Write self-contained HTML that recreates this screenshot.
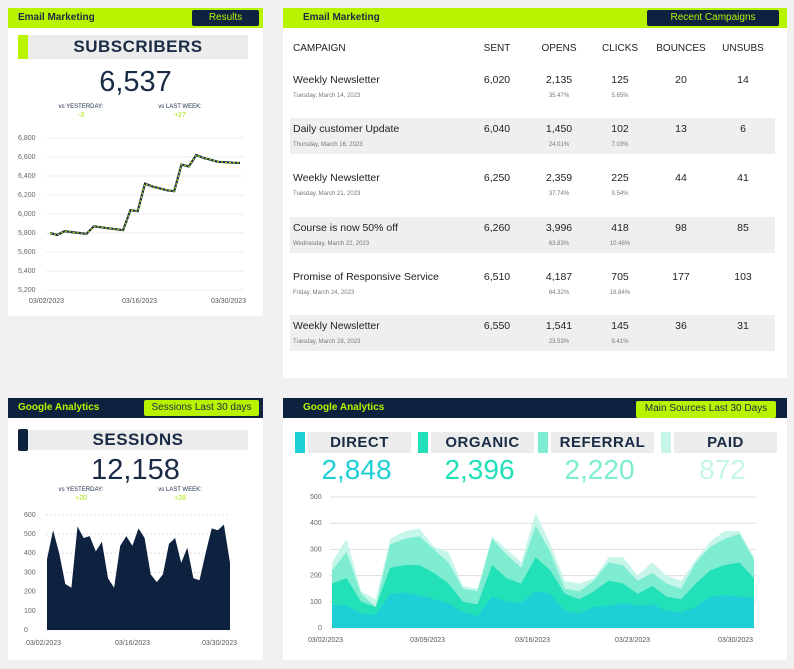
<!DOCTYPE html>
<html><head><meta charset="utf-8"><style>
*{margin:0;padding:0;box-sizing:border-box}
body{width:794px;height:669px;background:#f1f1f1;font-family:"Liberation Sans",sans-serif;position:relative;overflow:hidden;color:#333}
.p{position:absolute;background:#fff}
.hd{position:absolute;left:0;right:0;top:0;height:20px;font-size:10px;font-weight:bold;line-height:20px;padding-left:10px}
.tab{position:absolute;top:2px;height:16px;line-height:16px;font-size:10px;text-align:center;border-radius:2px}
.ab{position:absolute;font-size:10px;color:#222}
.t{position:absolute;background:#ececec;height:24px;font-weight:bold;font-size:17px;color:#1a2b45;text-align:center;line-height:24px;letter-spacing:.5px}
.big{position:absolute;font-size:29px;color:#1a2b45;text-align:center;width:100%}
.vs{position:absolute;font-size:6px;color:#1a2b45;text-align:center;width:70px}
.vs b{display:block;color:#a6e400;font-size:7px;font-weight:normal;margin-top:2px}
</style></head><body>

<div class="p" style="left:8px;top:8px;width:255px;height:308px">
 <div class="hd" style="background:#b8f400;color:#1a2b45">Email Marketing</div>
 <div class="tab" style="left:184px;width:67px;background:#0e2240;color:#b8f400">Results</div>
 <div class="t" style="left:10px;top:27px;width:230px;padding-left:10px">SUBSCRIBERS</div>
 <div style="position:absolute;left:10px;top:27px;width:10px;height:24px;background:#b8f400"></div>
 <div class="big" style="top:58px">6,537</div>
 <div class="vs" style="left:38px;top:96px">vs YESTERDAY:<b>-3</b></div>
 <div class="vs" style="left:137px;top:96px">vs LAST WEEK:<b>+27</b></div>
</div>

<div class="p" style="left:283px;top:8px;width:504px;height:370px">
 <div class="hd" style="background:#b8f400;color:#1a2b45;padding-left:20px">Email Marketing</div>
 <div class="tab" style="left:364px;width:132px;background:#0e2240;color:#b8f400">Recent Campaigns</div>
</div>
<div id="tbl"></div>

<div class="p" style="left:8px;top:398px;width:255px;height:262px">
 <div class="hd" style="background:#0e2240;color:#b8f400">Google Analytics</div>
 <div class="tab" style="left:136px;width:115px;background:#b8f400;color:#1a2b45">Sessions Last 30 days</div>
 <div class="t" style="left:10px;top:32px;width:230px;padding-left:10px;height:20px;line-height:20px">SESSIONS</div>
 <div style="position:absolute;left:10px;top:31px;width:10px;height:22px;background:#0e2240;border-radius:2px"></div>
 <div class="big" style="top:56px">12,158</div>
 <div class="vs" style="left:38px;top:89px">vs YESTERDAY:<b>+20</b></div>
 <div class="vs" style="left:137px;top:89px">vs LAST WEEK:<b>+28</b></div>
</div>

<div class="p" style="left:283px;top:398px;width:504px;height:262px">
 <div class="hd" style="background:#0e2240;color:#b8f400;padding-left:20px">Google Analytics</div>
 <div class="tab" style="left:353px;width:140px;top:3px;height:17px;background:#b8f400;color:#1a2b45">Main Sources Last 30 Days</div>
</div>
<div id="cats"></div>
<svg id="s1" style="position:absolute;left:0;top:0;z-index:5" width="794" height="669"></svg>

<script>
var s='';
function poly(pts){return pts.map(function(p){return p[0].toFixed(1)+','+p[1].toFixed(1)}).join(' ')}
var sv=[5800,5780,5820,5810,5800,5790,5870,5860,5850,5840,5830,6040,6030,6320,6290,6270,6250,6240,6520,6500,6620,6590,6570,6550,6545,6540,6537];
for(var i=0;i<9;i++){var v=6800-i*200,y=138+i*19;s+='<line x1="46" x2="244" y1="'+y+'" y2="'+y+'" stroke="#eee"/><text x="18" y="'+(y+2)+'" font-size="7" fill="#666">'+v.toString().replace(/(\d)(\d{3})$/,'$1,$2')+'</text>';}
var pts=sv.map(function(v,i){return [50+i*(190/(sv.length-1)),290-(v-5200)*152/1600]});
s+='<polyline points="'+poly(pts)+'" fill="none" stroke="#1a2b45" stroke-width="2.2"/><polyline points="'+poly(pts)+'" fill="none" stroke="#b8f400" stroke-width="1" stroke-dasharray="2 2"/>';
[['03/02/2023',29],['03/16/2023',122],['03/30/2023',211]].forEach(function(a){s+='<text x="'+a[1]+'" y="303" font-size="7" fill="#555">'+a[0]+'</text>'});
var ss=[370,520,400,240,220,540,480,490,410,460,270,220,440,490,440,530,480,290,250,290,450,480,350,430,270,260,400,530,520,550,350];
for(var i=0;i<=6;i++){var y=630-i*19.2;s+='<line x1="46" x2="230" y1="'+y+'" y2="'+y+'" stroke="#ddd" stroke-dasharray="2 2"/><text x="24" y="'+(y+2)+'" font-size="7" fill="#666">'+(i*100)+'</text>';}
var sp=ss.map(function(v,i){return [47+i*(183/(ss.length-1)),630-v*115/600]});
s+='<polygon points="47,630 '+poly(sp)+' 230,630" fill="#0e2240"/>';
[['03/02/2023',26],['03/16/2023',115],['03/30/2023',202]].forEach(function(a){s+='<text x="'+a[1]+'" y="645" font-size="7" fill="#555">'+a[0]+'</text>'});
var D=[90,85,55,50,130,135,125,110,95,60,45,120,100,95,140,130,65,55,80,85,95,85,90,65,60,80,120,125,120,115];
var O=[170,190,100,80,230,240,240,210,170,100,90,240,190,170,270,220,130,110,140,180,170,130,160,120,110,170,220,240,250,190];
var R=[220,290,130,80,320,340,350,300,250,150,140,340,280,230,390,290,150,140,180,250,240,180,210,170,150,250,310,340,360,260];
var P=[250,340,140,110,340,370,380,310,290,160,150,350,300,250,440,320,180,170,190,270,270,200,250,200,180,260,330,370,370,270];
for(var i=0;i<=5;i++){var y=628-i*26.2;s+='<line x1="330" x2="756" y1="'+y+'" y2="'+y+'" stroke="#ddd"/><text x="'+(i?310:318)+'" y="'+(y+2)+'" font-size="7" fill="#666">'+(i*100)+'</text>';}
function ap(a,c){var p=a.map(function(v,i){return [332+i*(422/(a.length-1)),628-v*0.262]});s+='<polygon points="332,628 '+poly(p)+' 754,628" fill="'+c+'"/>';}
ap(P,'#c6f5ea');ap(R,'#7decd0');ap(O,'#22e0b8');ap(D,'#1ecfd6');
[['03/02/2023',308],['03/09/2023',410],['03/16/2023',515],['03/23/2023',615],['03/30/2023',718]].forEach(function(a){s+='<text x="'+a[1]+'" y="642" font-size="7" fill="#555">'+a[0]+'</text>'});
document.getElementById('s1').innerHTML=s;
var h='';
var cols=[497,559,620,681,743];
var hdr=['SENT','OPENS','CLICKS','BOUNCES','UNSUBS'];
h+='<div class="ab" style="left:293px;top:43px">CAMPAIGN</div>';
hdr.forEach(function(t,i){h+='<div class="ab" style="left:'+(cols[i]-40)+'px;width:80px;text-align:center;top:43px">'+t+'</div>'});
var rows=[['Weekly Newsletter','Tuesday, March 14, 2023','6,020','2,135','125','20','14','35.47%','5.85%'],
['Daily customer Update','Thursday, March 16, 2023','6,040','1,450','102','13','6','24.01%','7.03%'],
['Weekly Newsletter','Tuesday, March 21, 2023','6,250','2,359','225','44','41','37.74%','9.54%'],
['Course is now 50% off','Wednesday, March 22, 2023','6,260','3,996','418','98','85','63.83%','10.46%'],
['Promise of Responsive Service','Friday, March 24, 2023','6,510','4,187','705','177','103','64.32%','16.84%'],
['Weekly Newsletter','Tuesday, March 28, 2023','6,550','1,541','145','36','31','23.53%','9.41%']];
rows.forEach(function(r,k){var y=74+k*49.2;
 if(k%2)h+='<div style="position:absolute;left:290px;top:'+(y-5)+'px;width:485px;height:36px;background:#efefef"></div>';
 h+='<div class="ab" style="left:293px;top:'+y+'px;font-size:10.5px">'+r[0]+'</div><div class="ab" style="left:293px;top:'+(y+19)+'px;font-size:6px;color:#777">'+r[1]+'</div>';
 for(var i=0;i<5;i++)h+='<div class="ab" style="left:'+(cols[i]-40)+'px;width:80px;text-align:center;top:'+y+'px;font-size:10.5px">'+r[i+2]+'</div>';
 h+='<div class="ab" style="left:519px;width:80px;text-align:center;top:'+(y+19)+'px;font-size:6px;color:#777">'+r[7]+'</div><div class="ab" style="left:580px;width:80px;text-align:center;top:'+(y+19)+'px;font-size:6px;color:#777">'+r[8]+'</div>';
});
document.getElementById('tbl').innerHTML=h;
var c='';
[['DIRECT','2,848','#1ecfd6',295],['ORGANIC','2,396','#22e0b8',418],['REFERRAL','2,220','#7decd0',538],['PAID','872','#c6f5ea',661]].forEach(function(a){
 c+='<div style="position:absolute;left:'+a[3]+'px;top:432px;width:10px;height:21px;background:'+a[2]+'"></div><div class="t" style="left:'+(a[3]+13)+'px;top:432px;width:103px;height:21px;line-height:21px;font-size:15px">'+a[0]+'</div><div style="position:absolute;left:'+(a[3]+5)+'px;width:113px;top:454px;text-align:center;font-size:28px;color:'+a[2]+'">'+a[1]+'</div>';});
document.getElementById('cats').innerHTML=c;
</script>
</body></html>
